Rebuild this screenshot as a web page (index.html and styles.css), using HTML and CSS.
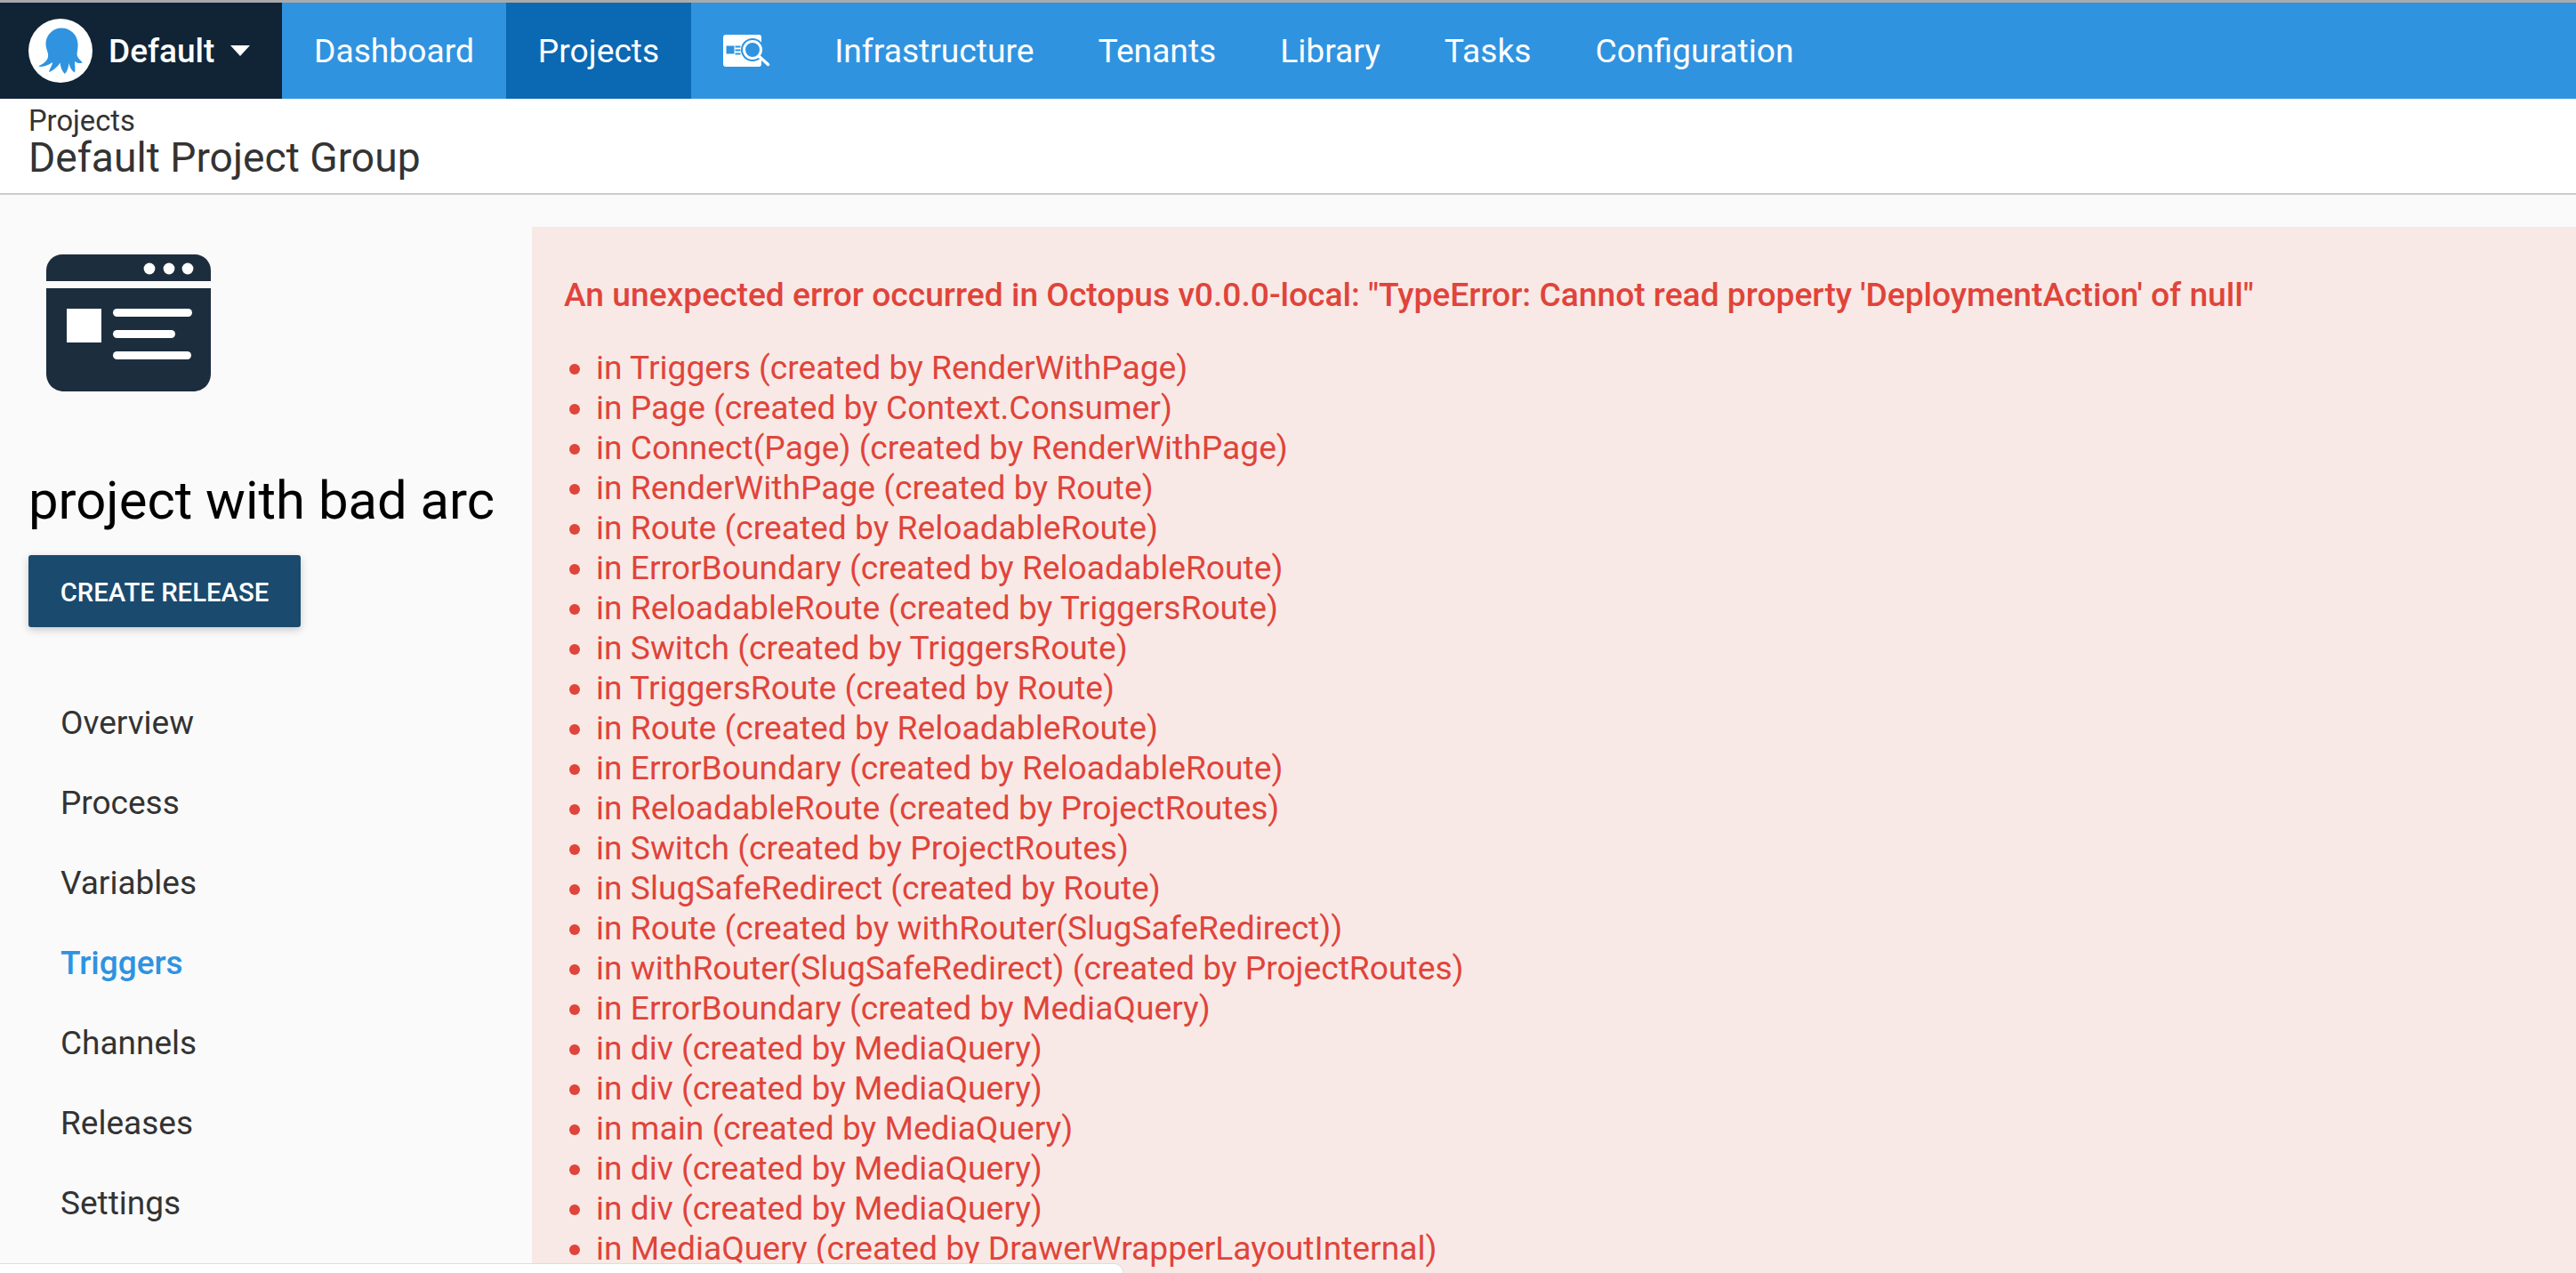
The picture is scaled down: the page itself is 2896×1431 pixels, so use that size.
FILE: index.html
```html
<!DOCTYPE html>
<html lang="en">
<head>
<meta charset="utf-8">
<title>Triggers - project with bad arc</title>
<link rel="stylesheet" href="styles.css">
</head>
<body>
<div class="page">
  <nav class="topnav">
    <div class="space">
      <svg class="logo" viewBox="0 0 72 72"><circle cx="36" cy="36" r="36" fill="#fff"/><path fill="#2f93e0" d="M37 10.5C47 10.5 55 18 55.5 28C56 36 53 40 56 44C57.5 46.5 60 47.5 60.5 49.5C58 51 54 49.5 52 48C52 52 53 57 52 60.5C49 59 46.5 55 45.5 50C45 55 43 60 41 62C38 60 36 54 35.5 49.5C33 54 27 59 23 60C24 56 27 52 27 49C23 52 16 55 11 53.5C16 51 21 48 22 43C23 38 19 34 19.5 27C20 18 28 10.5 37 10.5Z"/></svg>
      <span class="space-name">Default</span>
      <span class="caret"></span>
    </div>
    <a class="nav-item">Dashboard</a>
    <a class="nav-item active">Projects</a>
    <a class="nav-item">
      <svg class="search-icon" viewBox="0 0 53 36"><rect width="43" height="36" rx="3" fill="#fff"/><rect x="3.5" y="12.5" width="9" height="9" fill="#2f93e0"/><path d="M13.5 13.5h6M13.5 17.5h6M13.5 21.5h6" stroke="#2f93e0" stroke-width="2"/><circle cx="33" cy="17" r="13" fill="#2f93e0"/><circle cx="33" cy="17" r="9.5" fill="#2f93e0" stroke="#fff" stroke-width="3"/><path d="M40 24L50.5 33.5" stroke="#fff" stroke-width="3.4" stroke-linecap="round"/></svg>
    </a>
    <a class="nav-item">Infrastructure</a>
    <a class="nav-item">Tenants</a>
    <a class="nav-item">Library</a>
    <a class="nav-item">Tasks</a>
    <a class="nav-item">Configuration</a>
  </nav>
  <header class="pagehead">
    <div class="crumb">Projects</div>
    <div class="group">Default Project Group</div>
  </header>
  <div class="body">
    <aside class="sidebar">
      <svg class="project-icon" viewBox="0 0 185 154">
        <path fill="#1c2d3e" d="M0 30V18C0 8 8 0 18 0H167C177 0 185 8 185 18V30Z"/>
        <path fill="#1c2d3e" d="M0 38H185V134C185 145 177 154 165 154H20C8 154 0 145 0 134Z"/>
        <circle cx="116" cy="16" r="6.4" fill="#fff"/><circle cx="138" cy="16" r="6.4" fill="#fff"/><circle cx="159" cy="16" r="6.4" fill="#fff"/>
        <rect x="23" y="61" width="39" height="38" fill="#fff"/>
        <rect x="75" y="61" width="89" height="9" rx="4.5" fill="#fff"/>
        <rect x="75" y="85" width="70" height="9" rx="4.5" fill="#fff"/>
        <rect x="75" y="109" width="88" height="9" rx="4.5" fill="#fff"/>
      </svg>
      <h1 class="project-name">project with bad arc</h1>
      <button class="release">CREATE RELEASE</button>
      <ul class="menu">
        <li>Overview</li>
        <li>Process</li>
        <li>Variables</li>
        <li class="current">Triggers</li>
        <li>Channels</li>
        <li>Releases</li>
        <li>Settings</li>
      </ul>
    </aside>
    <main class="error">
      <h2 class="error-title">An unexpected error occurred in Octopus v0.0.0-local: "TypeError: Cannot read property 'DeploymentAction' of null"</h2>
      <ul class="stack">
        <li>in Triggers (created by RenderWithPage)</li>
        <li>in Page (created by Context.Consumer)</li>
        <li>in Connect(Page) (created by RenderWithPage)</li>
        <li>in RenderWithPage (created by Route)</li>
        <li>in Route (created by ReloadableRoute)</li>
        <li>in ErrorBoundary (created by ReloadableRoute)</li>
        <li>in ReloadableRoute (created by TriggersRoute)</li>
        <li>in Switch (created by TriggersRoute)</li>
        <li>in TriggersRoute (created by Route)</li>
        <li>in Route (created by ReloadableRoute)</li>
        <li>in ErrorBoundary (created by ReloadableRoute)</li>
        <li>in ReloadableRoute (created by ProjectRoutes)</li>
        <li>in Switch (created by ProjectRoutes)</li>
        <li>in SlugSafeRedirect (created by Route)</li>
        <li>in Route (created by withRouter(SlugSafeRedirect))</li>
        <li>in withRouter(SlugSafeRedirect) (created by ProjectRoutes)</li>
        <li>in ErrorBoundary (created by MediaQuery)</li>
        <li>in div (created by MediaQuery)</li>
        <li>in div (created by MediaQuery)</li>
        <li>in main (created by MediaQuery)</li>
        <li>in div (created by MediaQuery)</li>
        <li>in div (created by MediaQuery)</li>
        <li>in MediaQuery (created by DrawerWrapperLayoutInternal)</li>
      </ul>
    </main>
  </div>
  <div class="overlay"></div>
</div>
</body>
</html>
```

FILE: styles.css
```css
* { box-sizing: border-box; }
html, body { margin: 0; height: 100%; overflow: hidden; }
body { font-family: Roboto, sans-serif; background: #fafafa; color: #333; }
.page { position: relative; height: 100vh; display: flex; flex-direction: column; overflow: hidden; border-top: 3px solid #aaa; }

.topnav { display: flex; height: 108px; flex: none; background: #2f93e0; color: #fff; font-size: 37.2px; }
.space { width: 317px; background: #112435; display: flex; align-items: center; padding-left: 32px; }
.logo { width: 72px; height: 72px; }
.space-name { margin-left: 18px; font-weight: 500; font-size: 37px; }
.caret { margin-left: 18px; border-left: 11.5px solid transparent; border-right: 11.5px solid transparent; border-top: 12px solid #fff; }
.nav-item { padding: 0 36px; display: flex; align-items: center; }
.nav-item.active { background: #0b68b3; }
.search-icon { width: 53px; height: 36px; display: block; }

.pagehead { height: 108px; flex: none; background: #fff; border-bottom: 2px solid #ccc; padding: 9px 32px 0; }
.crumb { font-size: 32.7px; line-height: 32px; }
.group { font-size: 46.2px; line-height: 51px; }

.body { flex: 1; display: flex; min-height: 0; }
.sidebar { width: 598px; flex: none; padding-left: 32px; }
.project-icon { display: block; width: 185px; height: 154px; margin: 67px 0 0 20px; }
.project-name { margin: 87px 0 0; font-size: 59.8px; line-height: 72px; font-weight: 400; color: #000; white-space: nowrap; }
.release { display: block; margin-top: 25px; width: 306px; height: 81px; padding: 3px 0 0; border: 0; border-radius: 3px; background: #1a4a6e; color: #fff; font: 500 29.3px Roboto, sans-serif; box-shadow: 0 3px 10px rgba(0,0,0,.2); }
.menu { list-style: none; margin: 63px 0 0; padding: 0 0 0 36px; font-size: 37px; }
.menu li { height: 90px; line-height: 90px; color: #333; }
.menu li.current { color: #2f93e0; font-weight: 500; }

.error { flex: 1; margin-top: 36px; background: #f8e9e6; color: #e0443a; padding: 0 36px; min-width: 0; }
.error-title { margin: 56px 0 0; font-size: 37.2px; line-height: 40px; font-weight: 500; white-space: nowrap; }
.stack { margin: 40px 0 0; padding: 0 0 0 36px; font-size: 37.2px; line-height: 45px; }

.overlay { position: absolute; left: 0; bottom: 0; width: 1263px; height: 11px; background: #fff; border: 1px solid #ddd; border-width: 1px 1px 0 0; border-top-right-radius: 10px; }
```
